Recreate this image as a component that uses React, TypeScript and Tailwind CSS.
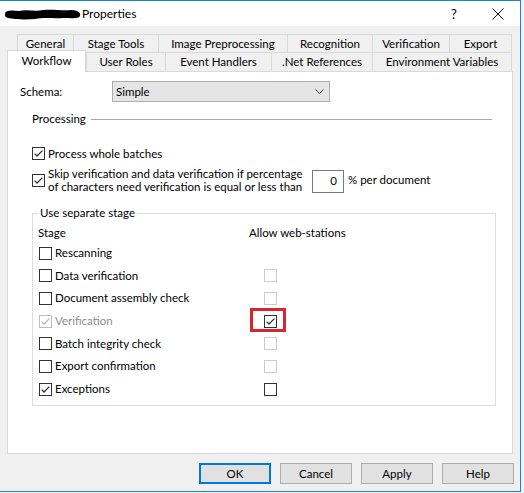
import React from 'react';

type BoxKind = 'normal' | 'muted' | 'mutedChecked';

function CheckBox({ checked = false, kind = 'normal' }: { checked?: boolean; kind?: BoxKind }) {
  const border = kind === 'normal' ? 'border-[#333333]' : kind === 'muted' ? 'border-[#cccccc]' : 'border-[#bcbcbc]';
  const stroke = kind === 'normal' ? '#333333' : '#b4b4b4';
  return (
    <span className={`flex w-[13px] h-[13px] shrink-0 border bg-white ${border}`}>
      {checked && (
        <svg width="11" height="11" viewBox="0 0 11 11" fill="none">
          <path d="M1.6 5.6 L4 8 L9.4 2.6" stroke={stroke} strokeWidth="1.3" />
        </svg>
      )}
    </span>
  );
}

const ROW_ONE = [
  { label: 'General', w: 'w-[56px]' },
  { label: 'Stage Tools', w: 'w-[85px]' },
  { label: 'Image Preprocessing', w: 'w-[129px]' },
  { label: 'Recognition', w: 'w-[85px]' },
  { label: 'Verification', w: 'w-[77px]' },
  { label: 'Export', w: 'w-[63px]' },
];

const ROW_TWO = [
  { label: 'User Roles', w: 'w-[79px]' },
  { label: 'Event Handlers', w: 'w-[106px]' },
  { label: '.Net References', w: 'w-[101px]' },
  { label: 'Environment Variables', w: 'w-[140px]' },
];

const STAGES: { label: string; left: BoxKind; leftChecked?: boolean; right?: BoxKind; rightChecked?: boolean; marked?: boolean }[] = [
  { label: 'Rescanning', left: 'normal' },
  { label: 'Data verification', left: 'normal', right: 'muted' },
  { label: 'Document assembly check', left: 'normal', right: 'muted' },
  { label: 'Verification', left: 'mutedChecked', leftChecked: true, right: 'normal', rightChecked: true, marked: true },
  { label: 'Batch integrity check', left: 'normal', right: 'muted' },
  { label: 'Export confirmation', left: 'normal', right: 'muted' },
  { label: 'Exceptions', left: 'normal', leftChecked: true, right: 'normal' },
];

function Button({ label, primary = false }: { label: string; primary?: boolean }) {
  return (
    <button
      className={`w-[72px] h-[21px] flex items-center justify-center bg-[#e1e1e1] ${
        primary ? 'border-2 border-[#0078d7]' : 'border border-[#adadad]'
      }`}
    >
      {label}
    </button>
  );
}

export default function App() {
  return (
    <div className="w-[524px] h-[493px] bg-[#f3f3f3] font-['Lato',sans-serif] text-[11.5px] leading-[16px] text-black">
      <div className="w-[521px] h-[492px] flex flex-col border-t border-r border-b border-[#1883d7] bg-[#f0f0f0]">
        {/* title bar */}
        <div className="h-[25px] flex items-center bg-white shrink-0 text-[12px]">
          <svg width="78" height="14" viewBox="0 0 78 14" className="ml-[3px]">
            <path
              d="M2 7 C2 3 9 3 16 4 C24 2 32 5 40 3 C50 2 60 4 68 3 C75 3 78 6 77 9 C76 12 68 11 60 11 C50 12 42 10 32 12 C22 13 10 12 5 11 C2 10 2 9 2 7 Z"
              fill="#000"
            />
          </svg>
          <span className="ml-[1px]">Properties</span>
          <div className="ml-auto flex h-full">
            <span className="w-[44px] flex items-center justify-center text-[13px]">?</span>
            <span className="w-[44px] flex items-center justify-center">
              <svg width="12" height="12" viewBox="0 0 12 12">
                <path d="M0.5 0.5 L11.5 11.5 M11.5 0.5 L0.5 11.5" stroke="#111" strokeWidth="1" />
              </svg>
            </span>
          </div>
        </div>

        {/* tabs */}
        <div className="mt-[8px] ml-[17px] flex h-[18px]">
          {ROW_ONE.map((t, i) => (
            <div
              key={t.label}
              className={`${t.w} flex items-center justify-center border-t border-l border-[#d9d9d9] ${
                i === ROW_ONE.length - 1 ? 'border-r' : ''
              }`}
            >
              {t.label}
            </div>
          ))}
        </div>
        <div className="ml-[7px] flex items-start h-[19px]">
          <div className="relative z-10 w-[79px] h-[22px] -mt-[2px] flex items-center justify-center pb-[2px] bg-white border-t border-l border-r border-[#d9d9d9]">
            Workflow
          </div>
          {ROW_TWO.map((t, i) => (
            <div
              key={t.label}
              className={`${t.w} h-[19px] flex items-center justify-center border-t border-l border-[#d9d9d9] ${
                i === ROW_TWO.length - 1 ? 'border-r' : ''
              }`}
            >
              {t.label}
            </div>
          ))}
        </div>

        {/* panel */}
        <div className="ml-[7px] w-[506px] h-[383px] flex flex-col border border-[#d9d9d9] bg-white">
          <div className="mt-[9px] h-[21px] flex items-center">
            <span className="ml-[12px] w-[92px]">Schema:</span>
            <div className="w-[218px] h-[21px] flex items-center justify-between pl-[3px] pr-[5px] bg-[#e5e5e5] border border-[#adadad]">
              <span>Simple</span>
              <svg width="9" height="5" viewBox="0 0 9 5" fill="none">
                <path d="M0.5 0.5 L4.5 4.5 L8.5 0.5" stroke="#333" strokeWidth="1" />
              </svg>
            </div>
          </div>

          <div className="mt-[10px] ml-[24px] mr-[20px] h-[14px] flex items-center">
            <span>Processing</span>
            <span className="ml-[5px] flex-1 h-px bg-[#a9a9a9]" />
          </div>

          <div className="mt-[21px] ml-[24px] h-[13px] flex items-center">
            <CheckBox checked />
            <span className="ml-[3px]">Process whole batches</span>
          </div>

          <div className="mt-[7px] ml-[24px] flex items-center">
            <CheckBox checked />
            <div className="ml-[3px] w-[264px] flex flex-col whitespace-nowrap">
              <span className="h-[13px] leading-[13px]">Skip verification and data verification if percentage</span>
              <span className="h-[13px] leading-[13px]">of characters need verification is equal or less than</span>
            </div>
            <div className="mt-[2px] w-[32px] h-[23px] flex items-center justify-end pr-[6px] border border-[#7a7a7a]">0</div>
            <span className="ml-[4px]">% per document</span>
          </div>

          <fieldset className="mt-[12px] ml-[24px] w-[464px] pb-[4px] border border-[#dcdcdc]">
            <legend className="ml-[5px] px-[2px] leading-[16px]">Use separate stage</legend>
            <div className="mt-[5px] h-[14px] flex items-center">
              <span className="w-[216px] pl-[5px]">Stage</span>
              <span>Allow web-stations</span>
            </div>
            <div className="mt-[1.7px] flex flex-col">
              {STAGES.map((s) => (
                <div key={s.label} className="h-[22.7px] flex items-center">
                  <div className="w-[231px] pl-[6px] flex items-center">
                    <CheckBox kind={s.left} checked={s.leftChecked} />
                    <span className={`ml-[3px] ${s.left === 'mutedChecked' ? 'text-[#8d8d8d]' : ''}`}>{s.label}</span>
                  </div>
                  {s.right && (
                    <div className="relative">
                      <CheckBox kind={s.right} checked={s.rightChecked} />
                      {s.marked && (
                        <span className="absolute -left-[14px] -top-[7px] w-[36px] h-[24px] border-[3px] border-[#d7262e]" />
                      )}
                    </div>
                  )}
                </div>
              ))}
            </div>
          </fieldset>
        </div>

        {/* buttons */}
        <div className="mt-[9px] mr-[6px] flex justify-end gap-[9px]">
          <Button label="OK" primary />
          <Button label="Cancel" />
          <Button label="Apply" />
          <Button label="Help" />
        </div>
      </div>
    </div>
  );
}
